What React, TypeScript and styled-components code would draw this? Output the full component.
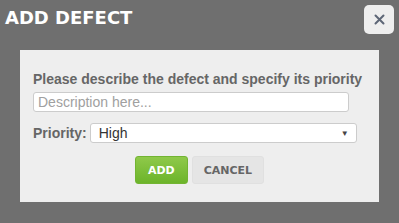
import React from 'react';
import styled, { createGlobalStyle } from 'styled-components';

const GlobalStyle = createGlobalStyle`
    html, body {
        margin: 0;
        padding: 0;
        background: #6f6f6f;
    }
`;

/** @returns 결함 추가 dialog */
export default function App() {
    return (
        <>
            <GlobalStyle />
            <Overlay>
                <Header>
                    <Title>ADD DEFECT</Title>
                    <CloseButton aria-label="close">
                        <svg width="11" height="11" viewBox="0 0 11 11">
                            <path d="M1.5 1.5 L9.5 9.5 M9.5 1.5 L1.5 9.5" stroke="#5d6676" strokeWidth="2" strokeLinecap="round" />
                        </svg>
                    </CloseButton>
                </Header>

                <Panel>
                    <Question>Please describe the defect and specify its priority</Question>
                    <TextInput placeholder="Description here..." />

                    <Row>
                        <Label>Priority:</Label>
                        <SelectBox>
                            <span>High</span>
                            <Arrow>▼</Arrow>
                        </SelectBox>
                    </Row>

                    <Actions>
                        <Button $primary>ADD</Button>
                        <Button>CANCEL</Button>
                    </Actions>
                </Panel>
            </Overlay>
        </>
    );
}

const Overlay = styled.div`
    width: 399px;
    height: 223px;
    background: #6f6f6f;
    display: flex;
    flex-direction: column;
    box-sizing: border-box;
`;

const Header = styled.div`
    display: flex;
    justify-content: space-between;
    align-items: flex-start;
    padding: 5px 5px 0 5px;
    height: 45px;
    box-sizing: border-box;
`;

const Title = styled.div`
    font-family: 'DejaVu Sans', sans-serif;
    font-size: 18px;
    font-weight: 700;
    color: #ffffff;
    margin-top: 2px;
`;

const CloseButton = styled.div`
    width: 30px;
    height: 29px;
    border-radius: 5px;
    background: #eeeeee;
    display: flex;
    align-items: center;
    justify-content: center;
`;

const Panel = styled.div`
    margin: 5px 0 0 20px;
    width: 359px;
    height: 152px;
    background: #eeeeee;
    box-sizing: border-box;
    padding: 20px 13px 0 13px;
    display: flex;
    flex-direction: column;
    font-family: 'Liberation Sans', Arial, sans-serif;
`;

const Question = styled.div`
    font-size: 14px;
    font-weight: 700;
    color: #666666;
    line-height: 16px;
    margin-top: 1px;
`;

const TextInput = styled.input`
    margin-top: 5px;
    width: 316px;
    height: 20px;
    box-sizing: border-box;
    border: 1px solid #cccccc;
    border-radius: 3px;
    background: #ffffff;
    padding: 0 4px;
    font-family: 'Liberation Sans', Arial, sans-serif;
    font-size: 14px;
    outline: none;
    &::placeholder {
        color: #a0a0a0;
    }
`;

const Row = styled.div`
    display: flex;
    align-items: center;
    gap: 3px;
    margin-top: 11px;
`;

const Label = styled.div`
    font-size: 14px;
    font-weight: 700;
    color: #666666;
`;

const SelectBox = styled.div`
    width: 267px;
    height: 20px;
    box-sizing: border-box;
    border: 1px solid #cccccc;
    border-radius: 3px;
    background: #ffffff;
    display: flex;
    align-items: center;
    justify-content: space-between;
    padding: 0 7px 0 8px;
    font-size: 14px;
    color: #333333;
`;

const Arrow = styled.span`
    font-size: 8px;
    color: #444444;
`;

const Actions = styled.div`
    display: flex;
    justify-content: center;
    gap: 4px;
    margin-top: 13px;
`;

const Button = styled.div<{ $primary?: boolean }>`
    height: 28px;
    padding: 0 ${(p) => (p.$primary ? '12px' : '11px')};
    border-radius: 3px;
    display: flex;
    align-items: center;
    font-family: 'DejaVu Sans', sans-serif;
    font-size: 11px;
    font-weight: 700;
    color: ${(p) => (p.$primary ? '#ffffff' : '#666666')};
    background: ${(p) => (p.$primary ? 'linear-gradient(#8fc94a, #6cb42a)' : '#e5e5e5')};
    border: 1px solid ${(p) => (p.$primary ? '#72b432' : '#e0e0e0')};
    box-sizing: border-box;
`;
